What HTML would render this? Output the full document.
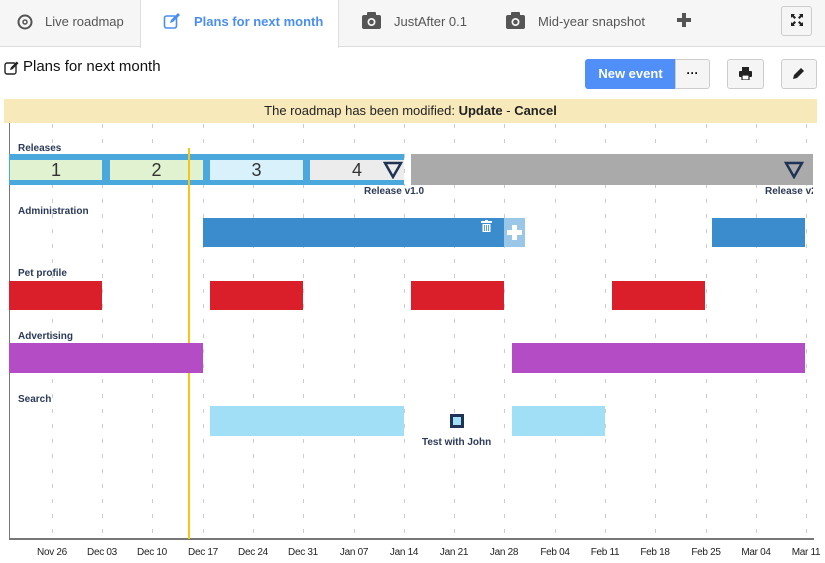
<!DOCTYPE html>
<html><head><meta charset="utf-8"><style>
*{margin:0;padding:0;box-sizing:border-box}
body{width:825px;height:563px;overflow:hidden;background:#fff;font-family:"Liberation Sans",Arial,sans-serif;position:relative}
.a{position:absolute}
.tabs{left:0;top:0;width:825px;height:47px;background:#f6f6f6;border-bottom:1px solid #ddd}
.tab{font-size:13px;color:#555;top:14px}
.grid{top:124px;width:1px;height:414px;background:repeating-linear-gradient(to bottom,#ccc 0 4px,transparent 4px 15px)}
.lbl{font-size:10px;font-weight:bold;color:#2b3a58}
.dt{font-size:10px;color:#222;top:547px;width:50px;text-align:center;margin-left:-25px;letter-spacing:-0.3px}
.btn{border:1px solid #ccc;border-radius:3px;background:#f5f5f5;height:30px}
.cell{top:160px;height:20px;font-size:18px;text-align:center;line-height:21px;color:#333}
</style></head><body>
<div class="a tabs"></div>
<div class="a" style="left:140px;top:0;width:199px;height:48px;background:#fff;border-left:1px solid #ddd;border-right:1px solid #ddd"></div>
<svg class="a" style="left:17px;top:14px" width="16" height="16" viewBox="0 0 16 16"><circle cx="8" cy="8" r="6.5" fill="none" stroke="#555" stroke-width="2"/><circle cx="8" cy="8" r="2" fill="none" stroke="#555" stroke-width="1.5"/></svg>
<div class="a tab" style="left:45px">Live roadmap</div>
<svg class="a" style="left:163px;top:12px" width="18" height="18" viewBox="0 0 18 18"><rect x="1.5" y="4" width="12" height="12" rx="2" fill="none" stroke="#4a8ef0" stroke-width="1.6"/><path d="M7 11l1-3 7-7 2 2-7 7z" fill="#4a8ef0"/></svg>
<div class="a tab" style="left:194px;color:#4a8ef0;font-weight:bold">Plans for next month</div>
<svg class="a" style="left:362px;top:12px" width="19" height="17" viewBox="0 0 19 17"><rect x="0" y="3" width="19" height="14" rx="2" fill="#555"/><rect x="5" y="0" width="9" height="4" rx="1" fill="#555"/><circle cx="9.5" cy="10" r="4" fill="#f6f6f6"/><circle cx="9.5" cy="10" r="2.3" fill="#555"/></svg>
<div class="a tab" style="left:394px">JustAfter 0.1</div>
<svg class="a" style="left:506px;top:12px" width="19" height="17" viewBox="0 0 19 17"><rect x="0" y="3" width="19" height="14" rx="2" fill="#555"/><rect x="5" y="0" width="9" height="4" rx="1" fill="#555"/><circle cx="9.5" cy="10" r="4" fill="#f6f6f6"/><circle cx="9.5" cy="10" r="2.3" fill="#555"/></svg>
<div class="a tab" style="left:538px">Mid-year snapshot</div>
<svg class="a" style="left:677px;top:13px" width="14" height="14"><path d="M5 0h4v5h5v4H9v5H5V9H0V5h5z" fill="#555"/></svg>
<div class="a btn" style="left:781px;top:6px;width:31px;height:30px"></div>
<svg class="a" style="left:791px;top:14px" width="12" height="12" viewBox="0 0 12 12"><path d="M0 0h4L2.8 1.2 5 3.5 3.5 5 1.2 2.8 0 4zM12 0v4L10.8 2.8 8.5 5 7 3.5 9.2 1.2 8 0zM0 12V8l1.2 1.2L3.5 7 5 8.5 2.8 10.8 4 12zM12 12H8l1.2-1.2L7 8.5 8.5 7l2.3 2.2L12 8z" fill="#222"/></svg>

<svg class="a" style="left:4px;top:60px" width="16" height="15" viewBox="0 0 16 15"><rect x="1" y="3" width="11" height="11" rx="2" fill="none" stroke="#222" stroke-width="1.4"/><path d="M6 10l.8-2.5 6-6 1.7 1.7-6 6z" fill="#222"/></svg>
<div class="a" style="left:23px;top:58px;font-size:15px;color:#111">Plans for next month</div>

<div class="a" style="left:585px;top:59px;width:91px;height:30px;background:#4f8ff7;border-radius:3px 0 0 3px;color:#fff;font-weight:bold;font-size:13px;text-align:center;line-height:30px">New event</div>
<div class="a btn" style="left:675px;top:59px;width:35px;border-radius:0 3px 3px 0;text-align:center;font-size:12px;font-weight:bold;line-height:26px">···</div>
<div class="a btn" style="left:727px;top:59px;width:37px"></div>
<svg class="a" style="left:739px;top:67px" width="13" height="13" viewBox="0 0 13 13"><rect x="3" y="0" width="7" height="4" fill="#222"/><rect x="0" y="4" width="13" height="6" rx="1" fill="#222"/><rect x="3" y="8" width="7" height="5" fill="#fff" stroke="#222" stroke-width="1.2"/></svg>
<div class="a btn" style="left:781px;top:59px;width:36px"></div>
<svg class="a" style="left:793px;top:67px" width="12" height="12" viewBox="0 0 12 12"><path d="M0 12l1-4 7-7 3 3-7 7z" fill="#222"/></svg>

<div class="a" style="left:4px;top:99px;width:813px;height:24px;background:#f8e9bb;font-size:13px;color:#222;text-align:center;line-height:23px">The roadmap has been modified: <b>Update</b> - <b>Cancel</b></div>

<div class="a" style="left:9px;top:123px;width:1px;height:416px;background:#777"></div>
<div class="a" style="left:9px;top:538px;width:805px;height:2px;background:#777"></div>

<div class="a grid" style="left:52px"></div><div class="a grid" style="left:102px"></div><div class="a grid" style="left:152px"></div><div class="a grid" style="left:203px"></div><div class="a grid" style="left:253px"></div><div class="a grid" style="left:303px"></div><div class="a grid" style="left:354px"></div><div class="a grid" style="left:404px"></div><div class="a grid" style="left:454px"></div><div class="a grid" style="left:504px"></div><div class="a grid" style="left:555px"></div><div class="a grid" style="left:605px"></div><div class="a grid" style="left:655px"></div><div class="a grid" style="left:706px"></div><div class="a grid" style="left:756px"></div><div class="a grid" style="left:806px"></div>

<div class="a dt" style="left:52px">Nov 26</div><div class="a dt" style="left:102px">Dec 03</div><div class="a dt" style="left:152px">Dec 10</div><div class="a dt" style="left:203px">Dec 17</div><div class="a dt" style="left:253px">Dec 24</div><div class="a dt" style="left:303px">Dec 31</div><div class="a dt" style="left:354px">Jan 07</div><div class="a dt" style="left:404px">Jan 14</div><div class="a dt" style="left:454px">Jan 21</div><div class="a dt" style="left:504px">Jan 28</div><div class="a dt" style="left:555px">Feb 04</div><div class="a dt" style="left:605px">Feb 11</div><div class="a dt" style="left:655px">Feb 18</div><div class="a dt" style="left:706px">Feb 25</div><div class="a dt" style="left:756px">Mar 04</div><div class="a dt" style="left:806px">Mar 11</div>

<div class="a lbl" style="left:18px;top:143px">Releases</div>
<div class="a" style="left:9px;top:154px;width:395px;height:31px;background:#4aa8dd"></div>
<div class="a cell" style="left:10px;width:92px;background:#e0f2d0">1</div>
<div class="a cell" style="left:110px;width:93px;background:#e0f2d0">2</div>
<div class="a cell" style="left:210px;width:93px;background:#d9f1fb">3</div>
<div class="a cell" style="left:310px;width:94px;background:#ececec">4</div>
<div class="a" style="left:411px;top:154px;width:402px;height:31px;background:#aaa"></div>
<svg class="a" style="left:383px;top:161px" width="20" height="18"><path d="M2 2h16L10 16z" fill="none" stroke="#1f3354" stroke-width="2.5"/></svg>
<svg class="a" style="left:784px;top:161px" width="20" height="18"><path d="M2 2h16L10 16z" fill="none" stroke="#1f3354" stroke-width="2.5"/></svg>
<div class="a lbl" style="left:363px;top:186px;background:#fff;padding:0 1px">Release v1.0</div>
<div class="a lbl" style="left:764px;top:186px;width:49px;overflow:hidden;background:#fff;padding:0 1px;white-space:nowrap">Release v2.0</div>

<div class="a" style="left:188px;top:148px;width:1.5px;height:391px;background:#f5c518"></div>

<div class="a lbl" style="left:18px;top:206px">Administration</div>
<div class="a" style="left:203px;top:218px;width:301px;height:29px;background:#3a8ccc"></div>
<div class="a" style="left:504px;top:218px;width:21px;height:29px;background:#9ac6e8"></div>
<svg class="a" style="left:507px;top:225px" width="15" height="15"><path d="M5 0h5v5h5v5h-5v5H5v-5H0V5h5z" fill="#fff"/></svg>
<svg class="a" style="left:481px;top:220px" width="11" height="12" viewBox="0 0 11 12"><rect x="0" y="1" width="11" height="2" fill="#fff"/><rect x="4" y="0" width="3" height="1" fill="#fff"/><path d="M1.5 4h8v8h-8z" fill="#fff"/><path d="M3.5 5v6M5.5 5v6M7.5 5v6" stroke="#3a8ccc" stroke-width=".8"/></svg>
<div class="a" style="left:712px;top:218px;width:93px;height:29px;background:#3a8ccc"></div>

<div class="a lbl" style="left:18px;top:268px">Pet profile</div>
<div class="a" style="left:9px;top:281px;width:93px;height:29px;background:#da1f2a"></div>
<div class="a" style="left:210px;top:281px;width:93px;height:29px;background:#da1f2a"></div>
<div class="a" style="left:411px;top:281px;width:93px;height:29px;background:#da1f2a"></div>
<div class="a" style="left:612px;top:281px;width:93px;height:29px;background:#da1f2a"></div>

<div class="a lbl" style="left:18px;top:331px">Advertising</div>
<div class="a" style="left:9px;top:343px;width:194px;height:30px;background:#b44cc6"></div>
<div class="a" style="left:512px;top:343px;width:293px;height:30px;background:#b44cc6"></div>

<div class="a lbl" style="left:18px;top:394px">Search</div>
<div class="a" style="left:210px;top:406px;width:194px;height:30px;background:#a1dff6"></div>
<div class="a" style="left:512px;top:406px;width:93px;height:30px;background:#a1dff6"></div>
<div class="a" style="left:450px;top:414px;width:14px;height:14px;border:3px solid #1f3354;background:#a1dff6"></div>
<div class="a lbl" style="left:422px;top:437px">Test with John</div>
</body></html>
